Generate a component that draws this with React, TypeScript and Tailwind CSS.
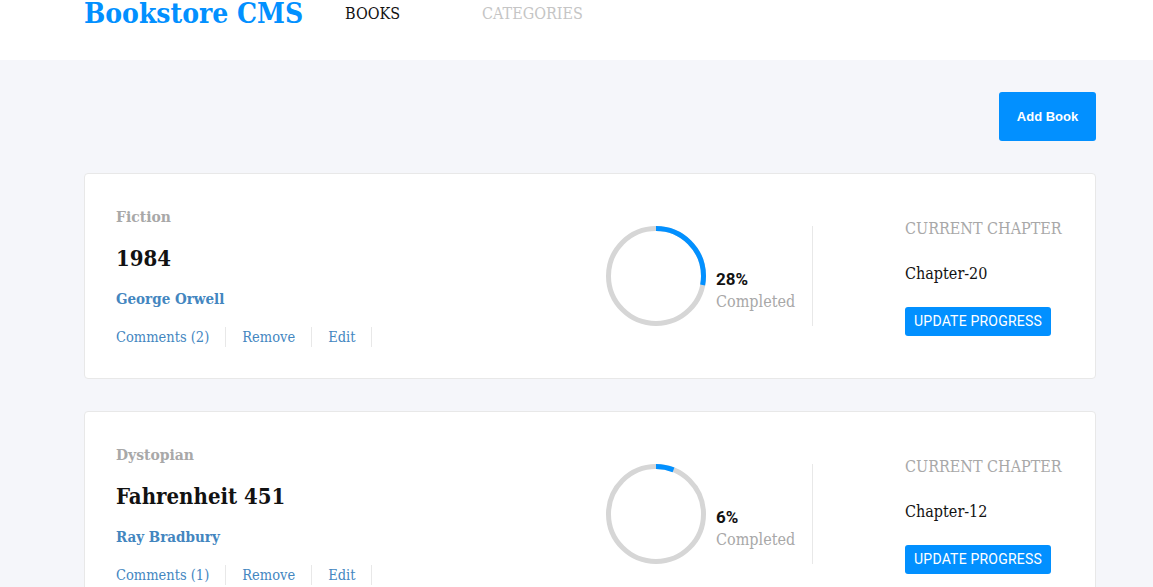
import React from "react";

type Book = {
  category: string;
  title: string;
  author: string;
  comments: number;
  percent: number;
  chapter: string;
};

const books: Book[] = [
  { category: "Fiction", title: "1984", author: "George Orwell", comments: 2, percent: 28, chapter: "Chapter-20" },
  { category: "Dystopian", title: "Fahrenheit 451", author: "Ray Bradbury", comments: 1, percent: 6, chapter: "Chapter-12" },
];

function Ring({ percent }: { percent: number }) {
  const r = 47.5;
  const c = 2 * Math.PI * r;
  return (
    <svg width="100" height="100" viewBox="0 0 100 100" className="shrink-0">
      <circle cx="50" cy="50" r={r} fill="none" stroke="#d6d6d6" strokeWidth="5" />
      <circle
        cx="50"
        cy="50"
        r={r}
        fill="none"
        stroke="#0290ff"
        strokeWidth="5"
        strokeDasharray={`${(c * percent) / 100} ${c}`}
        transform="rotate(-90 50 50)"
      />
    </svg>
  );
}

function Card({ b }: { b: Book }) {
  return (
    <div className="flex h-[206px] items-center rounded-[4px] border border-[#e8e8e8] bg-white pl-[31px]">
      <div className="flex-1 pt-[2px]">
        <div className="text-[15.5px] font-bold leading-[20px] text-[#a8a8a8]">{b.category}</div>
        <div className="mt-[17px] text-[22px] font-bold leading-[28px] text-[#121212]">{b.title}</div>
        <div className="mt-[17px] text-[15px] font-bold leading-[20px] text-[#4386bf]">{b.author}</div>
        <div className="mt-[18px] flex text-[14.5px] leading-[20px] text-[#4386bf]">
          <span className="border-r border-[#e8e8e8] pr-4">Comments ({b.comments})</span>
          <span className="border-r border-[#e8e8e8] px-4">Remove</span>
          <span className="border-r border-[#e8e8e8] px-4">Edit</span>
        </div>
      </div>
      <div className="flex w-[206px] items-center gap-[10px]">
        <Ring percent={b.percent} />
        <div className="mt-[28px]">
          <div className="[font-family:Roboto,'Liberation_Sans',sans-serif] text-[17px] font-bold leading-[20px] text-[#121212]">
            {b.percent}%
          </div>
          <div className="mt-[3px] text-[16px] leading-[20px] text-[#a8a8a8]">Completed</div>
        </div>
      </div>
      <div className="h-[100px] w-px bg-[#e8e8e8]" />
      <div className="w-[282px] pl-[92px] pt-[2px]">
        <div className="text-[16px] leading-[20px] text-[#a8a8a8]">CURRENT CHAPTER</div>
        <div className="mt-[25px] text-[16px] leading-[20px] text-[#121212]">{b.chapter}</div>
        <button className="mt-[23px] flex h-[29px] w-[146px] items-center justify-center rounded-[3px] bg-[#0290ff] [font-family:Roboto,'Liberation_Sans',sans-serif] text-[14px] font-normal tracking-[0.2px] text-white">
          UPDATE PROGRESS
        </button>
      </div>
    </div>
  );
}

export default function App() {
  return (
    <div className="min-h-screen bg-[#f5f6fa] [font-family:'DejaVu_Serif_Condensed','DejaVu_Serif',serif]">
      <header className="flex h-[60px] items-start bg-white pl-[84px]">
        <div className="w-[261px] text-[28px] font-bold leading-[28px] text-[#0290ff]">Bookstore CMS</div>
        <div className="w-[137px] pt-[4px] text-[16px] leading-[20px] text-[#121212]">BOOKS</div>
        <div className="pt-[4px] text-[16px] leading-[20px] text-[#c5c5c5]">CATEGORIES</div>
      </header>
      <main className="ml-[84px] w-[1012px] pt-8">
        <div className="flex justify-end">
          <button className="h-[49px] w-[97px] rounded-[3px] bg-[#0290ff] [font-family:'Liberation_Sans',Arial,sans-serif] text-[13px] font-bold text-white">
            Add Book
          </button>
        </div>
        <div className="mt-8 flex flex-col gap-8">
          {books.map((b) => (
            <Card key={b.title} b={b} />
          ))}
        </div>
      </main>
    </div>
  );
}
